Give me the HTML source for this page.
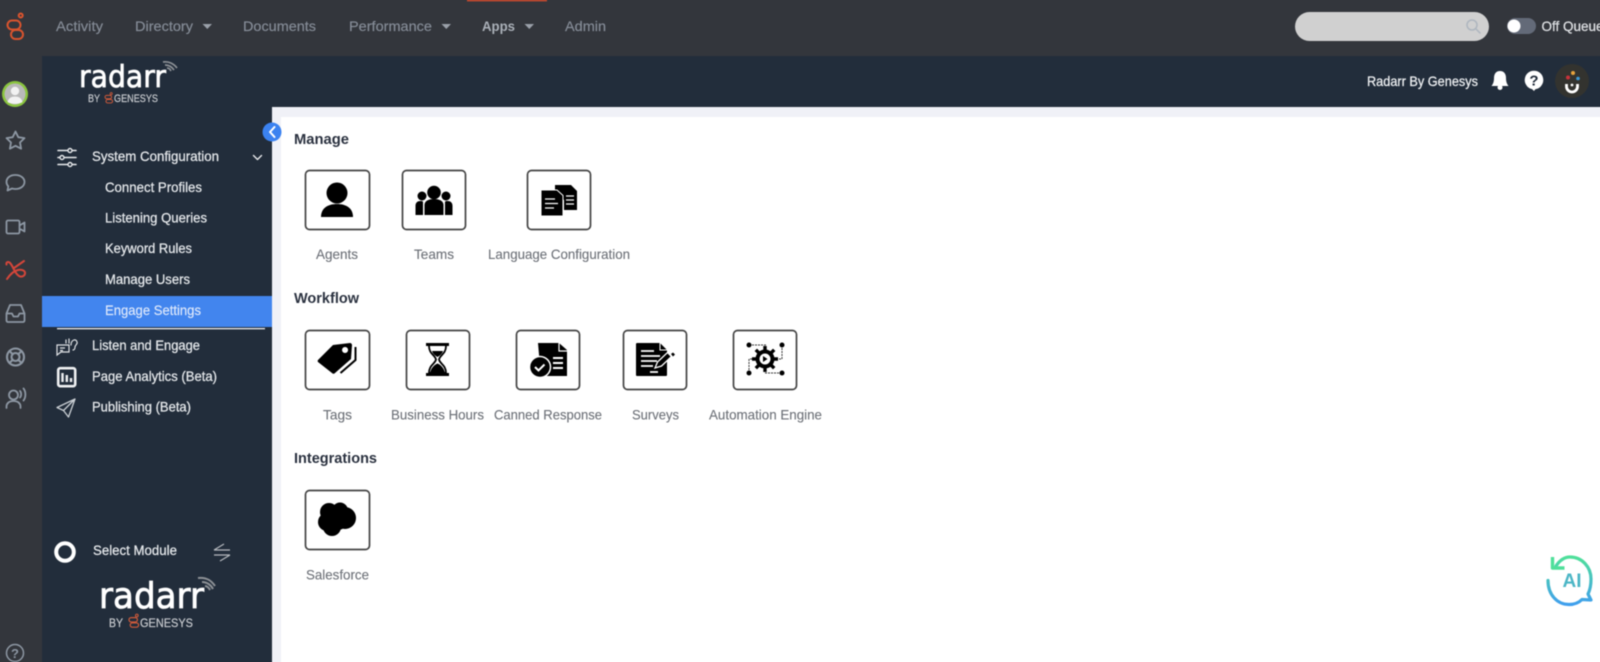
<!DOCTYPE html>
<html><head><meta charset="utf-8"><title>Engage Settings</title>
<style>
html,body{margin:0;padding:0;width:1600px;height:662px;overflow:hidden;background:#fff}
body{position:relative}
#clip{position:absolute;left:0;top:0;width:1600px;height:662px;overflow:hidden;contain:paint}
svg{display:block;position:absolute;left:-10px;top:-10px;filter:blur(.4px)}
text{font-family:"Liberation Sans",sans-serif;font-size:14px}
.nav{fill:#868d98;stroke:#868d98;stroke-width:.15}
.side{fill:#e6e9ec;stroke:#e6e9ec;stroke-width:.25}
.lab{fill:#6e7279;stroke:#6e7279;stroke-width:.12}
.h{fill:#2b3240;font-weight:bold;font-size:14.5px}
.card{fill:#fff;stroke:#444;stroke-width:1.7}
.rail{fill:none;stroke:#8d97a3;stroke-width:1.8;stroke-linecap:round;stroke-linejoin:round}
.w{fill:none;stroke:#e8eaec;stroke-width:1.6;stroke-linecap:round;stroke-linejoin:round}
.logo{fill:#fff;stroke:#fff;font-family:"DejaVu Sans","Liberation Sans",sans-serif}
.sub{fill:#c9ccd0;stroke:#c9ccd0;stroke-width:.2}
</style></head><body>
<div id="clip">
<svg width="1620" height="682" viewBox="-10 -10 1620 682" xmlns="http://www.w3.org/2000/svg">
<defs>
<linearGradient id="g" gradientUnits="userSpaceOnUse" x1="1570" y1="557" x2="1570" y2="606"><stop offset="0" stop-color="#4fe09a"/><stop offset="1" stop-color="#3f9df0"/></linearGradient>
<g id="mark"><circle cx="6.500" cy="1.200" r="1.100" fill="none" stroke-width=".9"/><rect x="0" y="3" width="7" height="3.600" rx="1.800" fill="none" stroke-width="1"/><rect x="1" y="7.400" width="7" height="3.600" rx="1.800" fill="none" stroke-width="1"/></g>
</defs>

<!-- base regions -->
<rect x="-10" y="-10" width="1620" height="682" fill="#fff"/>
<rect x="-10" y="-10" width="1620" height="66" fill="#33363c"/>
<rect x="-10" y="-10" width="52" height="682" fill="#33363c"/>
<rect x="42" y="56" width="1568" height="51" fill="#222d3b"/>
<rect x="42" y="56" width="230" height="616" fill="#222d3b"/>
<rect x="272" y="107" width="1338" height="10" fill="#f0f1f7"/>
<rect x="272" y="107" width="9" height="565" fill="#f0f1f7"/>
<rect x="467" y="-10" width="80" height="11.500" fill="#b5472f"/>

<!-- top nav -->
<text class="nav" x="56" y="31" textLength="47" lengthAdjust="spacingAndGlyphs">Activity</text>
<text class="nav" x="135" y="31" textLength="58" lengthAdjust="spacingAndGlyphs">Directory</text>
<path d="M202.500 24h9.500l-4.700 5z" fill="#9aa0a9"/>
<text class="nav" x="243" y="31" textLength="73" lengthAdjust="spacingAndGlyphs">Documents</text>
<text class="nav" x="349" y="31" textLength="83" lengthAdjust="spacingAndGlyphs">Performance</text>
<path d="M441.500 24h9.500l-4.700 5z" fill="#9aa0a9"/>
<text x="482" y="31" textLength="33" lengthAdjust="spacingAndGlyphs" fill="#aab0b8" font-weight="bold">Apps</text>
<path d="M524.500 24h9.500l-4.700 5z" fill="#9aa0a9"/>
<text class="nav" x="565" y="31" textLength="41" lengthAdjust="spacingAndGlyphs">Admin</text>

<!-- search and queue -->
<rect x="1295" y="12" width="194" height="29" rx="14.500" fill="#d0d0d0"/>
<circle cx="1472" cy="25" r="5" fill="none" stroke="#aeb6bf" stroke-width="1.500"/>
<path d="M1476 29l4 4" stroke="#aeb6bf" stroke-width="1.500" stroke-linecap="round"/>
<rect x="1507" y="18" width="29" height="16" rx="8" fill="#636a78"/>
<circle cx="1514" cy="26" r="6.500" fill="#fff"/>
<text x="1541.500" y="31" textLength="62" lengthAdjust="spacingAndGlyphs" fill="#dfe1e4" stroke="#dfe1e4" stroke-width=".25">Off Queue</text>

<!-- header right -->
<text x="1367" y="86" textLength="111" lengthAdjust="spacingAndGlyphs" fill="#eef0f2" stroke="#eef0f2" stroke-width=".25">Radarr By Genesys</text>
<path d="M1500 71c-4 0-6 3-6 7 0 4-1 6-2.500 8h17c-1.500-2-2.500-4-2.500-8 0-4-2-7-6-7z" fill="#fff"/><circle cx="1500" cy="87.500" r="2.500" fill="#fff"/>
<circle cx="1534" cy="80" r="9.300" fill="#fff"/><path d="M1530 87l4 4 3-4z" fill="#fff"/>
<text x="1534" y="85.500" text-anchor="middle" style="font-size:15px;font-weight:bold" fill="#222d3b">?</text>
<circle cx="1572" cy="81" r="17" fill="#33332f"/>
<circle cx="1573" cy="73" r="2" fill="#e8a33c"/><circle cx="1568" cy="77.500" r="2" fill="#c8323a"/><circle cx="1578" cy="78.500" r="1.800" fill="#3c9ad6"/>
<path d="M1566.500 84v2.500a5.500 5.500 0 0 0 11 0v-2.500" fill="none" stroke="#fff" stroke-width="2.800"/>
<circle cx="1572" cy="85" r="1.400" fill="#fff"/>

<!-- left rail -->
<g fill="none" stroke="#d9542e" stroke-width="2">
<circle cx="20.700" cy="15.500" r="2"/>
<rect x="7.500" y="20.500" width="13" height="9" rx="4.500"/>
<rect x="11" y="30" width="12" height="9" rx="4.500"/>
</g>
<circle cx="15" cy="94" r="13" fill="#8bc53f"/><circle cx="15" cy="94" r="10.500" fill="#b9b9b9"/>
<circle cx="15" cy="91" r="4.200" fill="#f2f2f2"/><path d="M7.500 102c1-4 4-5.500 7.500-5.500s6.500 1.500 7.500 5.500c-4 2.500-11 2.500-15 0z" fill="#f2f2f2"/>
<path class="rail" d="M15.500 131.500l2.800 5.700 6.200.9-4.500 4.400 1.100 6.200-5.600-2.900-5.600 2.900 1.100-6.200-4.500-4.400 6.200-.9z"/>
<path class="rail" d="M15.500 175c5 0 9 3 9 7s-4 7-9 7c-1.200 0-2.400-.2-3.500-.5l-4.500 2 .8-4.100c-1.100-1.200-1.800-2.800-1.800-4.400 0-4 3.500-7 8.500-7z"/>
<path class="rail" d="M8 220.500h10a1.500 1.500 0 0 1 1.500 1.500v10a1.500 1.500 0 0 1-1.500 1.500H8a1.500 1.500 0 0 1-1.500-1.500v-10a1.500 1.500 0 0 1 1.500-1.500zM19.500 225.500l5-3v9l-5-3"/>
<path d="M7 279c2-3 6-8 11-9 3-.6 7 0 7 3 0 3-3.500 4.500-6 3-5-3-6-11-9.500-13.500-2-1.300-3.500 0-3 2M14 268l10-7" fill="none" stroke="#d4463a" stroke-width="2" stroke-linecap="round" stroke-linejoin="round"/>
<path class="rail" d="M10 305h11l3.500 8.500v7a1.500 1.500 0 0 1-1.500 1.500H8a1.500 1.500 0 0 1-1.500-1.500v-7zM6.500 313.500h5.500l1.500 3h4.500l1.500-3h5"/>
<g class="rail" style="stroke-width:2.100"><circle cx="15.500" cy="357" r="8.500"/><circle cx="15.500" cy="357" r="4"/><path d="M9.500 351l3.200 3.200M21.500 351l-3.200 3.200M9.500 363l3.200-3.200M21.500 363l-3.200-3.200"/></g>
<circle class="rail" cx="13.500" cy="395" r="4.500"/><path class="rail" d="M6.500 408v-1.500c0-3 2.500-5.500 7-5.500s7 2.500 7 5.500v1.500M20 391c1.500 1.500 1.500 5 0 6.500M23.500 388.500c2.500 3 2.500 9 0 12"/>
<circle cx="15" cy="653" r="8.500" fill="none" stroke="#8d97a3" stroke-width="1.500"/>
<text x="15" y="658" text-anchor="middle" style="font-size:13px;font-weight:bold" fill="#8d97a3">?</text>

<!-- logo 1 -->
<text class="logo" x="79" y="87" textLength="87" lengthAdjust="spacingAndGlyphs" stroke-width=".7" style="font-size:30px">radarr</text>
<path d="M165 65c4 0 7 2 9 5M163 62c6-1 11 2 14 6M167 68c2 0 3 1 4 3" fill="none" stroke="#8d9196" stroke-width="1.700"/>
<text class="sub" x="88" y="102" textLength="12" lengthAdjust="spacingAndGlyphs" style="font-size:11px">BY</text>
<g stroke="#cf5a3a" transform="translate(105,92.500) scale(.95)"><use href="#mark"/></g>
<text class="sub" x="114" y="102" textLength="44" lengthAdjust="spacingAndGlyphs" style="font-size:11px">GENESYS</text>

<!-- collapse -->
<circle cx="272" cy="132" r="9.500" fill="#3b82f0"/>
<path d="M274.500 127l-4.500 5 4.500 5" fill="none" stroke="#fff" stroke-width="2" stroke-linecap="round" stroke-linejoin="round"/>

<!-- sidebar -->
<path class="w" d="M58 150.500h18M58 157.500h18M58 164.500h18"/>
<g fill="#222d3b" stroke="#e8eaec" stroke-width="1.400"><circle cx="70" cy="150.500" r="2"/><circle cx="62" cy="157.500" r="2"/><circle cx="70" cy="164.500" r="2"/></g>
<text class="side" x="92" y="161" textLength="127" lengthAdjust="spacingAndGlyphs">System Configuration</text>
<path class="w" d="M253.500 155.500l4 4 4-4" style="stroke-width:1.400"/>
<text class="side" x="105" y="192" textLength="97" lengthAdjust="spacingAndGlyphs">Connect Profiles</text>
<text class="side" x="105" y="222.500" textLength="102" lengthAdjust="spacingAndGlyphs">Listening Queries</text>
<text class="side" x="105" y="253" textLength="87" lengthAdjust="spacingAndGlyphs">Keyword Rules</text>
<text class="side" x="105" y="284" textLength="85" lengthAdjust="spacingAndGlyphs">Manage Users</text>
<rect x="42" y="296" width="230" height="31" fill="#4285ee"/>
<text x="105" y="315" textLength="96" lengthAdjust="spacingAndGlyphs" fill="#dfe9fb" stroke="#dfe9fb" stroke-width=".15">Engage Settings</text>
<rect x="57" y="328" width="208" height="1.300" fill="#eef0f2"/>
<path d="M57 345h12v7h-8l-4 3zM60 348h5M60 350.500h3" fill="none" stroke="#dfe2e5" stroke-width="1.200"/>
<path d="M66 343v-3M69 343v-4M71 345c0-5 5-7 6-3 1 2-2 3-2 5s-1 3-2 3" fill="none" stroke="#dfe2e5" stroke-width="1.200" stroke-linecap="round"/>
<text class="side" x="92" y="350" textLength="108" lengthAdjust="spacingAndGlyphs">Listen and Engage</text>
<rect x="58.200" y="368.200" width="17" height="18" rx="2" fill="none" stroke="#eef0f2" stroke-width="2.600"/>
<path d="M62.500 373v9M66.800 375v7M71 378v4" stroke="#eef0f2" stroke-width="2.400"/>
<text class="side" x="92" y="381" textLength="125" lengthAdjust="spacingAndGlyphs">Page Analytics (Beta)</text>
<path d="M75 399l-18 8.500 6.500 3 5 6.500zM75 399l-11.500 11.500" fill="none" stroke="#c9ced3" stroke-width="1.300" stroke-linejoin="round"/>
<text class="side" x="92" y="411.500" textLength="99" lengthAdjust="spacingAndGlyphs">Publishing (Beta)</text>

<!-- select module -->
<circle cx="65" cy="552" r="8.800" fill="none" stroke="#fff" stroke-width="4"/>
<text class="side" x="93" y="555" textLength="84" lengthAdjust="spacingAndGlyphs" style="font-size:13.500px">Select Module</text>
<path d="M214 550h16M214 550l10-6M230 555h-16M230 555l-10 6" fill="none" stroke="#b5b9be" stroke-width="1.200"/>

<!-- logo 2 -->
<text class="logo" x="99" y="608" textLength="105" lengthAdjust="spacingAndGlyphs" stroke-width=".8" style="font-size:36px">radarr</text>
<path d="M202 582c5 0 9 3 11 7M198 578c8-1 13 2 17 8M205 586c2 0 4 2 5 4" fill="none" stroke="#8d9196" stroke-width="2"/>
<text class="sub" x="109" y="627" textLength="14" lengthAdjust="spacingAndGlyphs" style="font-size:12px">BY</text>
<g stroke="#cf5a3a" transform="translate(129,614) scale(1.200)"><use href="#mark"/></g>
<text class="sub" x="140" y="627" textLength="53" lengthAdjust="spacingAndGlyphs" style="font-size:12px">GENESYS</text>

<!-- content headings -->
<text class="h" x="294" y="144" textLength="55" lengthAdjust="spacingAndGlyphs">Manage</text>
<text class="h" x="294" y="303" textLength="65" lengthAdjust="spacingAndGlyphs">Workflow</text>
<text class="h" x="294" y="463" textLength="83" lengthAdjust="spacingAndGlyphs">Integrations</text>

<!-- manage cards -->
<rect class="card" x="305.500" y="170.500" width="64" height="59" rx="4"/>
<rect class="card" x="402.500" y="170.500" width="63" height="59" rx="4"/>
<rect class="card" x="527.500" y="170.500" width="63" height="59" rx="4"/>
<circle cx="337" cy="193" r="10.500"/><path d="M321 217c0-9 7-13 16-13s16 4 16 13z"/>
<circle cx="434" cy="192.500" r="6.800"/><circle cx="422" cy="196" r="4.500"/><circle cx="446" cy="196" r="4.500"/>
<path d="M424.500 215v-10c0-4 4-6 9.500-6s9.500 2 9.500 6v10z"/><path d="M415.500 215v-9c0-3.500 2-5 5-5 1.500 0 2.500.3 2.500 1v13zM452.500 215v-9c0-3.500-2-5-5-5-1.500 0-2.500.3-2.500 1v13z"/>
<path d="M555 185h16l6 6v19h-13v-10l-9-8z"/><path d="M541 190h16l6 5.500v20.500h-22z" stroke="#fff" stroke-width="1"/>
<path d="M545 199h10M545 203.500h13M545 208h9M566 196h8M566 200h8M566 204h8" stroke="#fff" stroke-width="1.300"/>
<text class="lab" x="316" y="259" textLength="42" lengthAdjust="spacingAndGlyphs">Agents</text>
<text class="lab" x="414" y="259" textLength="40" lengthAdjust="spacingAndGlyphs">Teams</text>
<text class="lab" x="488" y="259" textLength="142" lengthAdjust="spacingAndGlyphs">Language Configuration</text>

<!-- workflow cards -->
<rect class="card" x="305.500" y="330.500" width="64" height="59" rx="4"/>
<rect class="card" x="406.500" y="330.500" width="63" height="59" rx="4"/>
<rect class="card" x="516.500" y="330.500" width="63" height="59" rx="4"/>
<rect class="card" x="623.500" y="330.500" width="63" height="59" rx="4"/>
<rect class="card" x="733.500" y="330.500" width="63" height="59" rx="4"/>
<path fill-rule="evenodd" d="M318 360l15-15 17-2c1 0 2 1 2 2l-1 14-16 14c-1 1-2 1-3 0l-14-11c-.5-.5-.5-1.500 0-2zM345 347a3 3 0 1 0 .1 0z"/>
<path d="M355.500 347v13l-15 13" fill="none" stroke="#000" stroke-width="2"/>
<rect x="426" y="343" width="23" height="3"/><rect x="426" y="373" width="23" height="3"/>
<path d="M429 346c0 8 6 9 7 13.500-1 4.500-7 5.500-7 13.500h17c0-8-6-9-7-13.500 1-4.500 7-5.500 7-13.500" fill="#fff" stroke="#000" stroke-width="1.800"/>
<path d="M432 351h11c-1 3-3 4.500-5.500 6-2.500-1.500-4.500-3-5.500-6zM430 373c1-5 4-8 7.500-9.500 3.500 1.500 6.500 4.500 7.500 9.500z"/>
<path d="M538 343h21l8 7v26h-27v-10z"/>
<path d="M559 343v8h8" fill="none" stroke="#fff" stroke-width="1.200"/>
<path d="M553 358h10M553 363h10M553 368h10" stroke="#fff" stroke-width="2"/>
<circle cx="540" cy="367" r="10.500" fill="#000" stroke="#fff" stroke-width="1.500"/>
<path d="M535 367l3.500 3.500 6-6" fill="none" stroke="#fff" stroke-width="2"/>
<path d="M637 343h23l7 7v25c0 .5-.5 1-1 1h-29c-.5 0-1-.5-1-1v-31c0-.5.500-1 1-1z"/>
<path d="M641 351h13M641 356h19M641 361h16M641 366h12M650 372h8" stroke="#fff" stroke-width="1.700"/>
<path d="M660 343v7h7" fill="none" stroke="#fff" stroke-width="1"/>
<path d="M655 368l2.500-6 10-9.500 4 4-10 9.500z" stroke="#fff" stroke-width="1.300"/>
<path d="M671 354l2-1.500 2 2-2 2z"/>
<path d="M749 345h17v6M782 345v14h-6M749 373v-14h6M782 373h-17v-6" fill="none" stroke="#333" stroke-width="1" stroke-dasharray="2 1"/>
<circle cx="749" cy="345" r="2.500"/><circle cx="782" cy="345" r="2.500"/><circle cx="749" cy="373" r="2.500"/><circle cx="782" cy="373" r="2.500"/>
<circle cx="765" cy="359" r="9.500"/>
<path d="M765 346v26M752 359h26M755.800 349.800l18.400 18.400M774.200 349.800l-18.400 18.400" stroke="#000" stroke-width="3.400"/>
<circle cx="765" cy="359" r="5.500" fill="#fff"/><path d="M763 356l4.500 3-4.500 3z"/>
<text class="lab" x="323" y="419.500" textLength="29" lengthAdjust="spacingAndGlyphs">Tags</text>
<text class="lab" x="391" y="419.500" textLength="93" lengthAdjust="spacingAndGlyphs">Business Hours</text>
<text class="lab" x="494" y="419.500" textLength="108" lengthAdjust="spacingAndGlyphs">Canned Response</text>
<text class="lab" x="632" y="419.500" textLength="47" lengthAdjust="spacingAndGlyphs">Surveys</text>
<text class="lab" x="709" y="419.500" textLength="113" lengthAdjust="spacingAndGlyphs">Automation Engine</text>

<!-- integrations -->
<rect class="card" x="305.500" y="490.500" width="64" height="59" rx="4"/>
<circle cx="329" cy="512" r="9"/><circle cx="340" cy="510.500" r="8"/><circle cx="345" cy="518" r="11"/><circle cx="327" cy="522" r="9"/><circle cx="332" cy="527" r="9"/><circle cx="338" cy="521" r="9"/>
<text class="lab" x="306" y="579.500" textLength="63" lengthAdjust="spacingAndGlyphs">Salesforce</text>

<!-- AI bubble -->
<path d="M1556 566c4-6 9-9 14-9 12 0 21 10 21 22 0 6-1 11-3 15l3 6-9-.5c-3 3-8 5-13 5-12 0-21-10-21-24" fill="none" stroke="url(#g)" stroke-width="3.200" stroke-linecap="round" stroke-linejoin="round"/>
<path d="M1552.500 557v11h12" fill="none" stroke="#4fe09a" stroke-width="3.400" stroke-linejoin="round"/>
<text x="1572" y="587" text-anchor="middle" textLength="19" lengthAdjust="spacingAndGlyphs" style="font-size:19px;font-weight:bold" fill="#4cb6c6">AI</text>
</svg>
</div>
</body></html>
